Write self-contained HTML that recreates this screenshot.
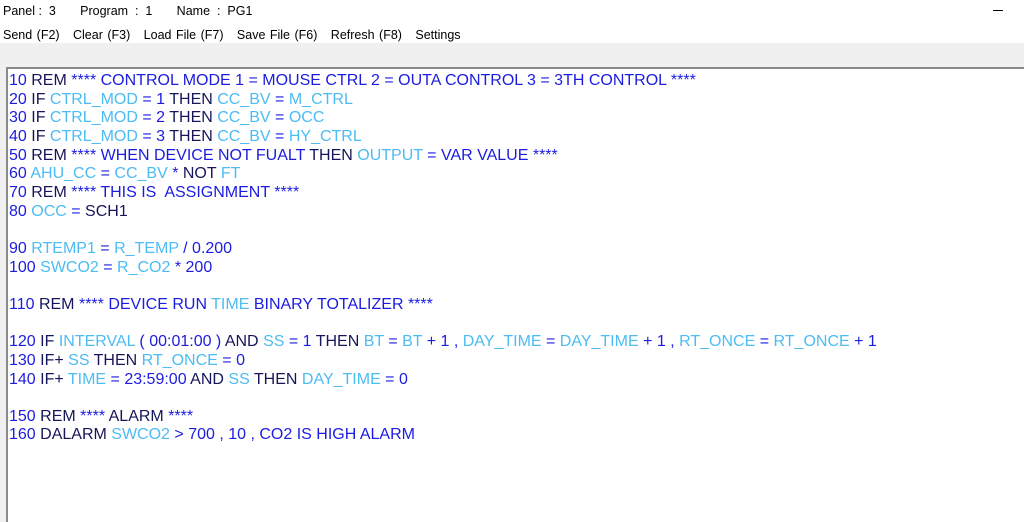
<!DOCTYPE html>
<html><head><meta charset="utf-8"><style>
body{margin:0;width:1024px;height:522px;overflow:hidden;background:#fff;font-family:"Liberation Sans","Noto Sans CJK SC",sans-serif;position:relative}
.hd{position:absolute;left:3px;top:4px;font-size:12.5px;color:#000;white-space:pre}
.mn{position:absolute;left:3px;top:28px;font-size:12.5px;color:#000;white-space:pre;word-spacing:1px}
.min{position:absolute;left:993px;top:10px;width:10px;height:1px;background:#000}
.band{position:absolute;left:0;top:43px;width:1024px;height:479px;background:#f0f0f0}
.box{position:absolute;left:6px;top:67px;width:1018px;height:455px;background:#fff;border-top:2px solid #8a8a8a;border-left:2px solid #8a8a8a;box-sizing:border-box}
.code{position:absolute;left:9px;top:72px;font-size:16px;line-height:18.65px;color:#1c1ce0;white-space:pre}
.k{color:#16165a}.v{color:#4dbcf2}
</style></head><body>
<div class="hd">Panel :  3       Program  :  1       Name  :  PG1</div>
<div class="min"></div>
<div class="mn">Send (F2)   Clear (F3)   Load File (F7)   Save File (F6)   Refresh (F8)   Settings</div>
<div class="band"></div>
<div class="box"></div>
<div class="code">10 <span class="k">REM</span> **** CONTROL MODE 1 = MOUSE CTRL 2 = OUTA CONTROL 3 = 3TH CONTROL ****
20 <span class="k">IF</span> <span class="v">CTRL_MOD</span> = 1 <span class="k">THEN</span> <span class="v">CC_BV</span> = <span class="v">M_CTRL</span>
30 <span class="k">IF</span> <span class="v">CTRL_MOD</span> = 2 <span class="k">THEN</span> <span class="v">CC_BV</span> = <span class="v">OCC</span>
40 <span class="k">IF</span> <span class="v">CTRL_MOD</span> = 3 <span class="k">THEN</span> <span class="v">CC_BV</span> = <span class="v">HY_CTRL</span>
50 <span class="k">REM</span> **** WHEN DEVICE NOT FUALT <span class="k">THEN</span> <span class="v">OUTPUT</span> = VAR VALUE ****
60 <span class="v">AHU_CC</span> = <span class="v">CC_BV</span> * <span class="k">NOT</span> <span class="v">FT</span>
70 <span class="k">REM</span> **** THIS IS  ASSIGNMENT ****
80 <span class="v">OCC</span> = <span class="k">SCH1</span>

90 <span class="v">RTEMP1</span> = <span class="v">R_TEMP</span> / 0.200
100 <span class="v">SWCO2</span> = <span class="v">R_CO2</span> * 200

110 <span class="k">REM</span> **** DEVICE RUN <span class="v">TIME</span> BINARY TOTALIZER ****

120 <span class="k">IF</span> <span class="v">INTERVAL</span> ( 00:01:00 ) <span class="k">AND</span> <span class="v">SS</span> = 1 <span class="k">THEN</span> <span class="v">BT</span> = <span class="v">BT</span> + 1 , <span class="v">DAY_TIME</span> = <span class="v">DAY_TIME</span> + 1 , <span class="v">RT_ONCE</span> = <span class="v">RT_ONCE</span> + 1
130 <span class="k">IF+</span> <span class="v">SS</span> <span class="k">THEN</span> <span class="v">RT_ONCE</span> = 0
140 <span class="k">IF+</span> <span class="v">TIME</span> = 23:59:00 <span class="k">AND</span> <span class="v">SS</span> <span class="k">THEN</span> <span class="v">DAY_TIME</span> = 0

150 <span class="k">REM</span> **** <span class="k">ALARM</span> ****
160 <span class="k">DALARM</span> <span class="v">SWCO2</span> &gt; 700 , 10 , CO2 IS HIGH ALARM</div>
</body></html>
